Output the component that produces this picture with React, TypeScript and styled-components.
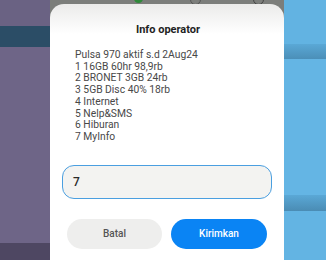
import React from "react";
import styled, { createGlobalStyle } from "styled-components";

const Global = createGlobalStyle`
  html, body { margin: 0; padding: 0; width: 326px; height: 260px; overflow: hidden; }
  body { font-family: Roboto, "Noto Sans", sans-serif; }
`;

const Page = styled.div`
  width: 326px;
  height: 260px;
  display: grid;
  grid-template-columns: 50px 234px 42px;
  overflow: hidden;
`;

const LeftPane = styled.div`
  background: #6e6587;
  display: flex;
  flex-direction: column;
`;

const Band = styled.div<{ $h: number; $bg: string }>`
  height: ${(p) => p.$h}px;
  background: ${(p) => p.$bg};
  flex-shrink: 0;
`;

const RightPane = styled.div`
  background: #63b3e2;
  display: flex;
  flex-direction: column;
`;

const Center = styled.div`
  position: relative;
  background: #7c7e7b;
  display: flex;
  flex-direction: column;
  padding-top: 4px;
`;

const StatusIcon = styled.div<{ $x: number; $c: string; $ring?: boolean }>`
  position: absolute;
  top: -6px;
  left: ${(p) => p.$x}px;
  width: 9px;
  height: 9px;
  border-radius: 50%;
  background: ${(p) => (p.$ring ? "transparent" : p.$c)};
  border: ${(p) => (p.$ring ? `1.2px solid ${p.$c}` : "none")};
`;

const Dialog = styled.div`
  flex: 1;
  background: linear-gradient(#ebebea 0px, #ffffff 30px);
  border-radius: 14px 14px 0 0;
  display: flex;
  flex-direction: column;
  align-items: stretch;
  padding: 19px 12px 0 12px;
  position: relative;
  z-index: 1;
`;

const Title = styled.div`
  font-family: Roboto, "Noto Sans", sans-serif;
  font-weight: 700;
  font-size: 11px;
  color: #1f1f1f;
  text-align: center;
  line-height: 14px;
  padding-left: 2px;
`;

const Message = styled.div`
  margin-top: 12px;
  padding-left: 13px;
  font-family: Roboto, "Noto Sans", sans-serif;
  font-size: 10.3px;
  line-height: 11.7px;
  color: #484848;
`;

const Line = styled.div`
  white-space: nowrap;
`;

const Input = styled.div`
  margin-top: 22px;
  height: 34px;
  box-sizing: border-box;
  border: 1.5px solid #4a9fe0;
  border-radius: 12px;
  background: #f3f3f1;
  display: flex;
  align-items: center;
  padding-left: 10px;
  font-family: Roboto, "Noto Sans", sans-serif;
  font-size: 12px;
  font-weight: 500;
  color: #2a2a2a;
`;

const Buttons = styled.div`
  margin-top: 20px;
  display: grid;
  grid-template-columns: 95px 96px;
  gap: 9px;
  padding-left: 5px;
`;

const Button = styled.div<{ $primary?: boolean }>`
  height: 30px;
  border-radius: 15px;
  display: flex;
  align-items: center;
  justify-content: center;
  font-family: Roboto, "Noto Sans", sans-serif;
  font-size: 10px;
  font-weight: 500;
  background: ${(p) => (p.$primary ? "#0a84f4" : "#eeeeed")};
  color: ${(p) => (p.$primary ? "#ffffff" : "#555555")};
`;

const lines = [
  "Pulsa 970 aktif s.d 2Aug24",
  "1 16GB 60hr 98,9rb",
  "2 BRONET 3GB 24rb",
  "3 5GB Disc 40% 18rb",
  "4 Internet",
  "5 Nelp&SMS",
  "6 Hiburan",
  "7 MyInfo",
];

export default function App() {
  return (
    <>
      <Global />
      <Page>
        <LeftPane>
          <Band $h={26} $bg="#6a6283" />
          <Band $h={21} $bg="#2b4d66" />
          <Band $h={196} $bg="#6e6587" />
          <Band $h={17} $bg="#4e4762" />
        </LeftPane>
        <Center>
          <StatusIcon $x={84} $c="#2f8a3a" />
          <StatusIcon $x={140} $c="#555" $ring />
          <StatusIcon $x={203} $c="#444" $ring />
          <Dialog>
            <Title>Info operator</Title>
            <Message>
              {lines.map((l) => (
                <Line key={l}>{l}</Line>
              ))}
            </Message>
            <Input>7</Input>
            <Buttons>
              <Button>Batal</Button>
              <Button $primary>Kirimkan</Button>
            </Buttons>
          </Dialog>
        </Center>
        <RightPane>
          <Band $h={44} $bg="#62b3e2" />
          <Band $h={15} $bg="linear-gradient(#5aa8d6, #4b8fb8)" />
          <Band $h={136} $bg="#64b5e4" />
          <Band $h={16} $bg="linear-gradient(#5aa8d6, #4a8cb4)" />
          <Band $h={49} $bg="#63b4e3" />
        </RightPane>
      </Page>
    </>
  );
}
